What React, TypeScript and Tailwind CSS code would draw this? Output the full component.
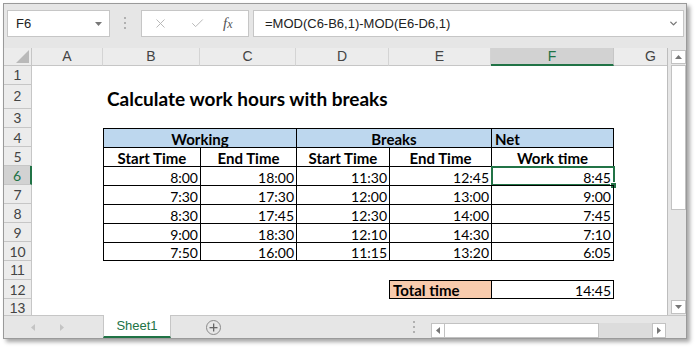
import React from 'react'
import { X, Check, ChevronDown } from 'lucide-react'

const ui = "font-['Liberation_Sans',Arial,sans-serif]"
const xl = "font-['Lato','Liberation_Sans',sans-serif]"

const times = [
  { n: 6, v: ['8:00', '18:00', '11:30', '12:45', '8:45'] },
  { n: 7, v: ['7:30', '17:30', '12:00', '13:00', '9:00'] },
  { n: 8, v: ['8:30', '17:45', '12:30', '14:00', '7:45'] },
  { n: 9, v: ['9:00', '18:30', '12:10', '14:30', '7:10'] },
  { n: 10, v: ['7:50', '16:00', '11:15', '13:20', '6:05'] },
]

const RowHead = ({ n, active = false }: { n: number; active?: boolean }) => (
  <div
    className={
      active
        ? 'w-[28px] shrink-0 flex items-center justify-center border-b border-b-[#c6c6c6] border-r-2 border-r-[#217346] bg-[#d2d2d2] text-[#217346] text-[14px]'
        : 'w-[28px] shrink-0 flex items-center justify-center border-b border-r border-[#c6c6c6] bg-[#ececec] text-[#444] text-[14px]'
    }
  >
    {n}
  </div>
)

const Cell = ({
  w,
  className = '',
  children,
}: {
  w: string
  className?: string
  children?: React.ReactNode
}) => (
  <div
    className={`${w} shrink-0 flex items-end whitespace-nowrap relative ${className}`}
  >
    {children}
  </div>
)

const Blank = ({ n, tall = false }: { n: number; tall?: boolean }) => (
  <div className={tall ? 'flex h-[24px] shrink-0' : 'flex h-[19px] shrink-0'}>
    <RowHead n={n} />
    <div className="flex-1 bg-white" />
  </div>
)

const ColHead = ({
  w,
  label,
  active = false,
  className = '',
}: {
  w: string
  label: string
  active?: boolean
  className?: string
}) => (
  <div
    className={`${w} shrink-0 flex items-center text-[14px] ${
      active
        ? 'bg-[#d2d2d2] text-[#217346] border-b-2 border-b-[#217346] border-r border-r-[#c6c6c6]'
        : 'bg-[#ececec] text-[#444] border-b border-b-[#c6c6c6] border-r border-r-[#d4d4d4]'
    } ${className}`}
  >
    {label}
  </div>
)

const num = 'justify-end pr-[2px] text-[14px] leading-[14px] text-black'
const bold = 'justify-center font-bold text-[15px] leading-[15px] text-black'
const tb = 'border-l border-t border-black'

export default function App() {
  return (
    <div className={`w-[696px] h-[350px] bg-white overflow-hidden pt-[3px] pl-[3px] ${ui}`}>
      <div className="w-[684px] h-[336px] border border-[#9a9a9a] bg-[#e6e6e6] flex flex-col shadow-[3px_3px_4px_rgba(0,0,0,0.35)]">
        {/* formula bar */}
        <div className="h-[44px] shrink-0 flex items-start pt-[6px]">
          <div className="ml-[3px] w-[103px] h-[27px] bg-white border border-[#c6c6c6] flex items-center justify-between pl-[8px] pr-[7px] text-[13px] text-[#222]">
            <span>F6</span>
            <svg width="7" height="4" viewBox="0 0 7 4">
              <polygon points="0,0 7,0 3.5,4" fill="#777" />
            </svg>
          </div>
          <div className="ml-[14px] mt-[7px] w-[2px] flex flex-col gap-[3px]">
            <div className="w-[2px] h-[2px] bg-[#b0b0b0]" />
            <div className="w-[2px] h-[2px] bg-[#b0b0b0]" />
            <div className="w-[2px] h-[2px] bg-[#b0b0b0]" />
          </div>
          <div className="ml-[15px] w-[108px] h-[27px] bg-white border border-[#c6c6c6] flex items-center text-[#b4b4b4]">
            <X size={15} strokeWidth={1.5} className="ml-[11px]" />
            <Check size={15} strokeWidth={1.5} className="ml-[22px]" />
            <span className="ml-[18px] font-['Liberation_Serif',serif] italic text-[15px] text-[#555]">
              f<span className="text-[12px]">x</span>
            </span>
          </div>
          <div className="ml-[4px] mr-[2px] flex-1 h-[27px] bg-white border border-[#c6c6c6] flex items-center justify-between pl-[11px] pr-[4px] text-[13px] text-[#222]">
            <span>=MOD(C6-B6,1)-MOD(E6-D6,1)</span>
            <ChevronDown size={11} strokeWidth={3} className="text-[#777]" />
          </div>
        </div>

        {/* grid + vertical scroll */}
        <div className="h-[267px] shrink-0 flex">
          <div className="w-[664px] h-[267px] overflow-hidden flex flex-col bg-white border-r border-[#bdbdbd]">
            <div className="flex h-[18px] shrink-0">
              <div className="w-[28px] shrink-0 bg-[#ececec] border-r border-b border-[#c6c6c6] flex items-end justify-end pr-[2px] pb-[2px]">
                <svg width="13" height="13" viewBox="0 0 13 13">
                  <polygon points="13,0 13,13 0,13" fill="#b9b9b9" />
                </svg>
              </div>
              <ColHead w="w-[71px]" label="A" className="justify-center" />
              <ColHead w="w-[97px]" label="B" className="justify-center" />
              <ColHead w="w-[96px]" label="C" className="justify-center" />
              <ColHead w="w-[93px]" label="D" className="justify-center" />
              <ColHead w="w-[102px]" label="E" className="justify-center" />
              <ColHead w="w-[123px]" label="F" active className="justify-center" />
              <ColHead w="w-[54px]" label="G" className="pl-[31px] !border-r-0" />
            </div>

            <Blank n={1} />

            <div className="flex h-[24px] shrink-0">
              <RowHead n={2} />
              <Cell w="w-[71px]" />
              <Cell
                w="flex-1"
                className={`${xl} pl-[4px] pb-[1px] font-bold text-[19px] leading-[19px] text-black`}
              >
                Calculate work hours with breaks
              </Cell>
            </div>

            <Blank n={3} />

            <div className={`flex h-[19px] shrink-0 ${xl}`}>
              <RowHead n={4} />
              <Cell w="w-[71px]" />
              <Cell w="w-[193px]" className={`${tb} ${bold} bg-[#bdd7ee]`}>
                Working
              </Cell>
              <Cell w="w-[195px]" className={`${tb} ${bold} bg-[#bdd7ee]`}>
                Breaks
              </Cell>
              <Cell
                w="w-[123px]"
                className={`${tb} border-r pl-[3px] font-bold text-[15px] leading-[15px] text-black bg-[#bdd7ee]`}
              >
                Net
              </Cell>
              <div className="flex-1" />
            </div>

            <div className={`flex h-[19px] shrink-0 ${xl}`}>
              <RowHead n={5} />
              <Cell w="w-[71px]" />
              <Cell w="w-[97px]" className={`${tb} ${bold}`}>
                Start Time
              </Cell>
              <Cell w="w-[96px]" className={`${tb} ${bold}`}>
                End Time
              </Cell>
              <Cell w="w-[93px]" className={`${tb} ${bold}`}>
                Start Time
              </Cell>
              <Cell w="w-[102px]" className={`${tb} ${bold}`}>
                End Time
              </Cell>
              <Cell w="w-[123px]" className={`${tb} border-r ${bold}`}>
                Work time
              </Cell>
              <div className="flex-1" />
            </div>

            {times.map((r) => (
              <div key={r.n} className={`flex h-[19px] shrink-0 ${xl}`}>
                <RowHead n={r.n} active={r.n === 6} />
                <Cell w="w-[71px]" />
                <Cell w="w-[97px]" className={`${tb} ${num} ${r.n === 10 ? 'border-b' : ''}`}>
                  {r.v[0]}
                </Cell>
                <Cell w="w-[96px]" className={`${tb} ${num} ${r.n === 10 ? 'border-b' : ''}`}>
                  {r.v[1]}
                </Cell>
                <Cell w="w-[93px]" className={`${tb} ${num} ${r.n === 10 ? 'border-b' : ''}`}>
                  {r.v[2]}
                </Cell>
                <Cell w="w-[102px]" className={`${tb} ${num} ${r.n === 10 ? 'border-b' : ''}`}>
                  {r.v[3]}
                </Cell>
                <Cell
                  w="w-[123px]"
                  className={`${tb} border-r ${num} ${r.n === 10 ? 'border-b' : ''}`}
                >
                  {r.v[4]}
                  {r.n === 6 && (
                    <>
                      <div className="absolute -left-[1px] -top-[1px] w-[124px] h-[20px] border-2 border-[#217346]" />
                      <div className="absolute -right-[4px] -bottom-[4px] w-[7px] h-[7px] bg-[#217346] border border-white" />
                    </>
                  )}
                </Cell>
                <div className="flex-1" />
              </div>
            ))}

            <Blank n={11} />

            <div className={`flex h-[19px] shrink-0 ${xl}`}>
              <RowHead n={12} />
              <Cell w="w-[71px]" />
              <Cell w="w-[97px]" />
              <Cell w="w-[96px]" />
              <Cell w="w-[93px]" />
              <Cell
                w="w-[102px]"
                className="border-l border-t border-b border-black bg-[#f8cbad] pl-[3px] font-bold text-[15px] leading-[15px] text-black"
              >
                Total time
              </Cell>
              <Cell w="w-[123px]" className={`border border-black ${num}`}>
                14:45
              </Cell>
              <div className="flex-1" />
            </div>

            <Blank n={13} />
          </div>

          <div className="w-[18px] shrink-0 pl-[3px] pt-[2px] flex flex-col">
            <div className="w-[15px] h-[14px] bg-white border border-[#c2c2c2] flex items-center justify-center">
              <svg width="7" height="4" viewBox="0 0 7 4">
                <polygon points="0,4 7,4 3.5,0" fill="#777" />
              </svg>
            </div>
            <div className="w-[15px] h-[145px] mt-[1px] bg-white border border-[#c2c2c2]" />
            <div className="flex-1" />
            <div className="w-[15px] h-[14px] mb-[1px] bg-white border border-[#c2c2c2] flex items-center justify-center">
              <svg width="7" height="4" viewBox="0 0 7 4">
                <polygon points="0,0 7,0 3.5,4" fill="#777" />
              </svg>
            </div>
          </div>
        </div>

        {/* sheet tabs */}
        <div className="h-[23px] shrink-0 flex border-t border-[#c6c6c6] bg-[#e6e6e6]">
          <div className="w-[99px] shrink-0 flex items-center text-[#c0c0c0]">
            <svg width="4" height="7" viewBox="0 0 4 7" className="ml-[27px]">
              <polygon points="4,0 4,7 0,3.5" fill="#c4c4c4" />
            </svg>
            <svg width="4" height="7" viewBox="0 0 4 7" className="ml-[25px]">
              <polygon points="0,0 0,7 4,3.5" fill="#c4c4c4" />
            </svg>
          </div>
          <div className="w-[68px] shrink-0 -mt-[1px] bg-white border-x border-[#c6c6c6] border-b-2 border-b-[#217346] flex items-center justify-center text-[13px] text-[#217346]">
            Sheet1
          </div>
          <div className="ml-[35px] w-[15px] h-[15px] self-center rounded-full border border-[#8a8a8a] flex items-center justify-center text-[#666]">
            <svg width="9" height="9" viewBox="0 0 9 9">
              <rect x="4" y="0.5" width="1.3" height="8" fill="#666" />
              <rect x="0.5" y="4" width="8" height="1.3" fill="#666" />
            </svg>
          </div>
          <div className="ml-[192px] self-center w-[2px] flex flex-col gap-[3px]">
            <div className="w-[2px] h-[2px] bg-[#b0b0b0]" />
            <div className="w-[2px] h-[2px] bg-[#b0b0b0]" />
            <div className="w-[2px] h-[2px] bg-[#b0b0b0]" />
          </div>
          <div className="ml-[16px] self-end mb-[0px] h-[15px] flex">
            <div className="w-[14px] h-[15px] bg-white border border-[#c2c2c2] flex items-center justify-center">
              <svg width="4" height="7" viewBox="0 0 4 7">
                <polygon points="4,0 4,7 0,3.5" fill="#777" />
              </svg>
            </div>
            <div className="w-[154px] h-[15px] bg-white border-y border-r border-[#c2c2c2]" />
            <div className="w-[53px] h-[15px] bg-[#dcdcdc]" />
            <div className="w-[14px] h-[15px] bg-white border border-[#c2c2c2] flex items-center justify-center">
              <svg width="4" height="7" viewBox="0 0 4 7">
                <polygon points="0,0 0,7 4,3.5" fill="#777" />
              </svg>
            </div>
          </div>
        </div>
      </div>
    </div>
  )
}
